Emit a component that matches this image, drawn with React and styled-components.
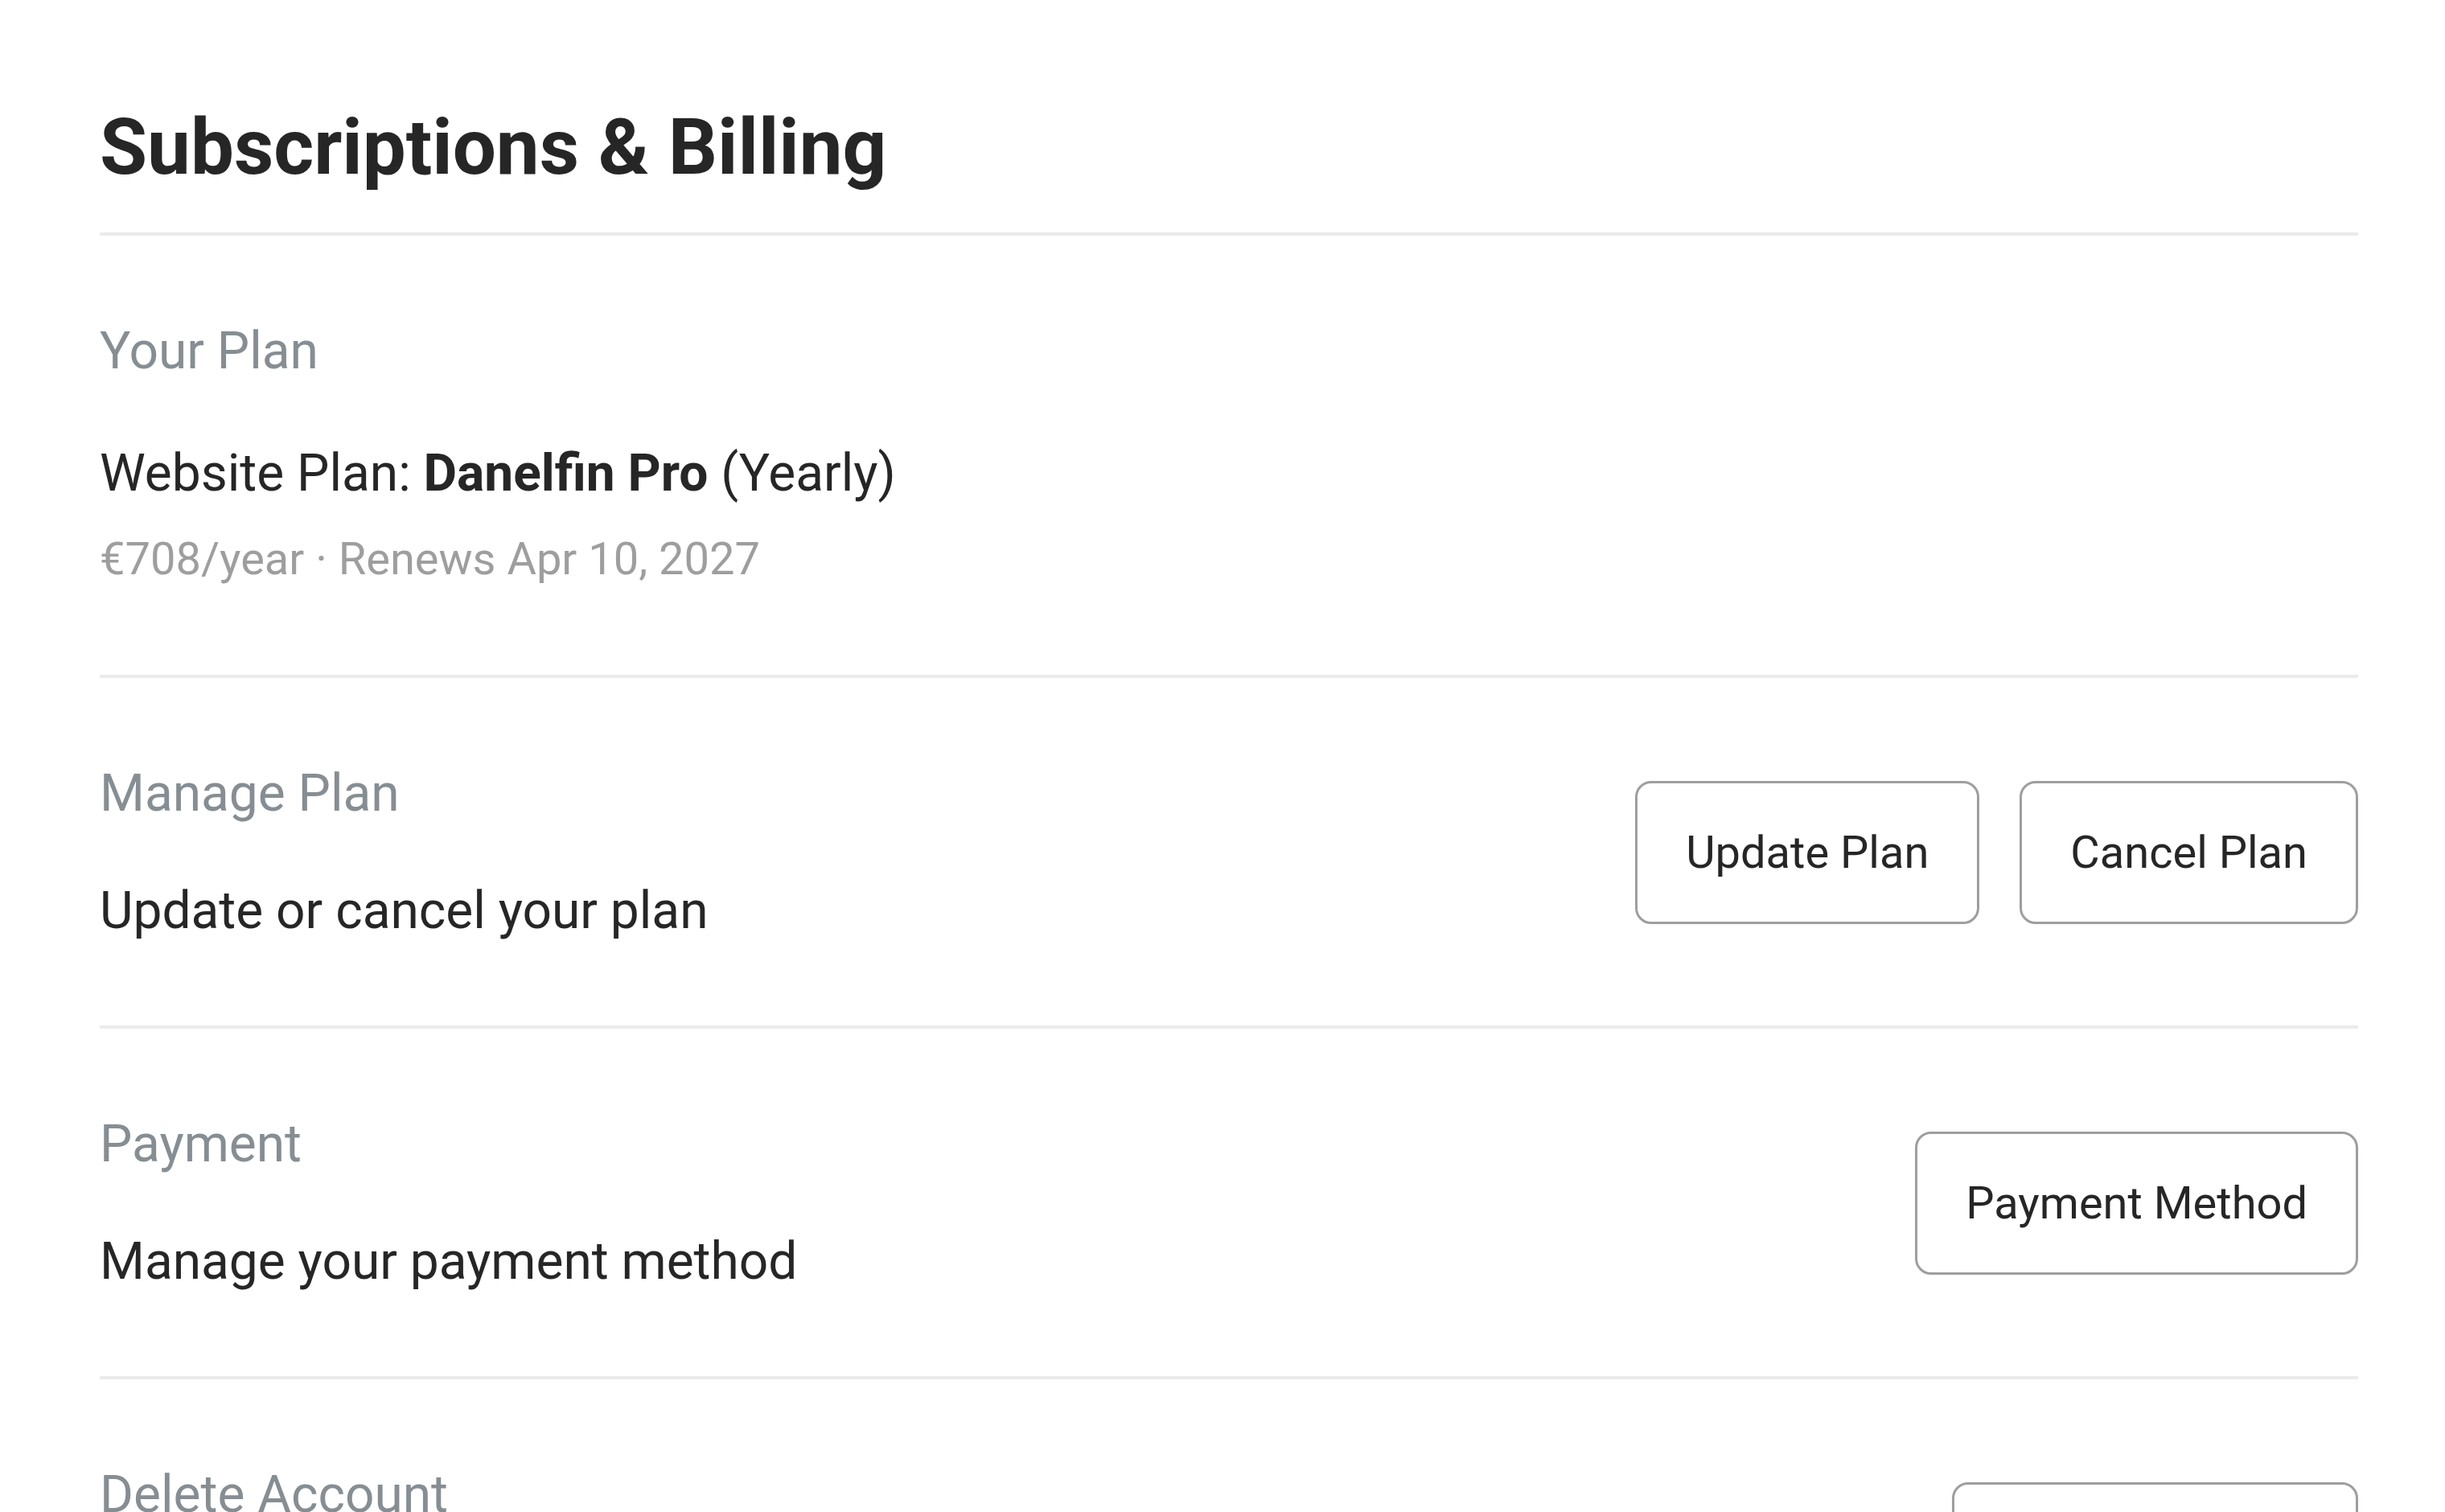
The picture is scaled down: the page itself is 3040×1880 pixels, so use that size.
import styled, { createGlobalStyle } from "styled-components"

const GlobalStyle = createGlobalStyle`
  html, body {
    margin: 0;
    padding: 0;
    background: #ffffff;
  }
  body {
    font-family: Roboto, "Liberation Sans", Arial, sans-serif;
    color: #262626;
  }
  * {
    box-sizing: border-box;
  }
`

const rows = [
  {
    label: "Manage Plan",
    text: "Update or cancel your plan",
    buttons: ["Update Plan", "Cancel Plan"],
  },
  {
    label: "Payment",
    text: "Manage your payment method",
    buttons: ["Payment Method"],
  },
  {
    label: "Delete Account",
    text: "Permanently delete your account",
    buttons: ["Delete Account"],
  },
]

const App = () => {
  return (
    <>
      <GlobalStyle />
      <Page>
        <Title>Subscriptions &amp; Billing</Title>

        <Section $padBottom={102}>
          <Info>
            <Label>Your Plan</Label>
            <PlanLine>
              Website Plan: <strong>Danelfin Pro</strong> (Yearly)
            </PlanLine>
            <Meta>€708/year · Renews Apr 10, 2027</Meta>
          </Info>
        </Section>

        {rows.map((row) => (
          <Section key={row.label} $padBottom={94}>
            <Info>
              <Label>{row.label}</Label>
              <Description>{row.text}</Description>
            </Info>
            <Actions>
              {row.buttons.map((b) => (
                <Button key={b} type="button">
                  {b}
                </Button>
              ))}
            </Actions>
          </Section>
        ))}
      </Page>
    </>
  )
}

export default App

const Page = styled.main`
  padding: 126px 108px 0 124px;
`

const Title = styled.h1`
  margin: 0;
  font-size: 96px;
  line-height: 1.2;
  font-weight: 700;
  color: #262626;
  padding-bottom: 48px;
  border-bottom: 4px solid #ebebeb;
`

const Section = styled.section`
  display: flex;
  align-items: center;
  justify-content: space-between;
  padding: 96px 0 ${({ $padBottom }) => ($padBottom ? `${$padBottom}px` : "96px")};
  border-bottom: 4px solid #ebebeb;
`

const Info = styled.div`
  display: flex;
  flex-direction: column;
`

const Label = styled.div`
  font-size: 64px;
  line-height: 96px;
  color: #868e93;
`

const Description = styled.div`
  margin-top: 50px;
  font-size: 64px;
  line-height: 96px;
  color: #262626;
`

const PlanLine = styled.div`
  margin-top: 56px;
  font-size: 64px;
  line-height: 96px;
  color: #262626;
  strong {
    font-weight: 700;
  }
`

const Meta = styled.div`
  margin-top: 16px;
  font-size: 56px;
  line-height: 84px;
  color: #9e9e9e;
`

const Actions = styled.div`
  display: flex;
  gap: 50px;
`

const Button = styled.button`
  font-family: inherit;
  font-size: 56px;
  line-height: 84px;
  padding: 44px 60px;
  color: #262626;
  background: #ffffff;
  border: 3px solid #9e9e9e;
  border-radius: 20px;
  cursor: pointer;
  white-space: nowrap;
`
